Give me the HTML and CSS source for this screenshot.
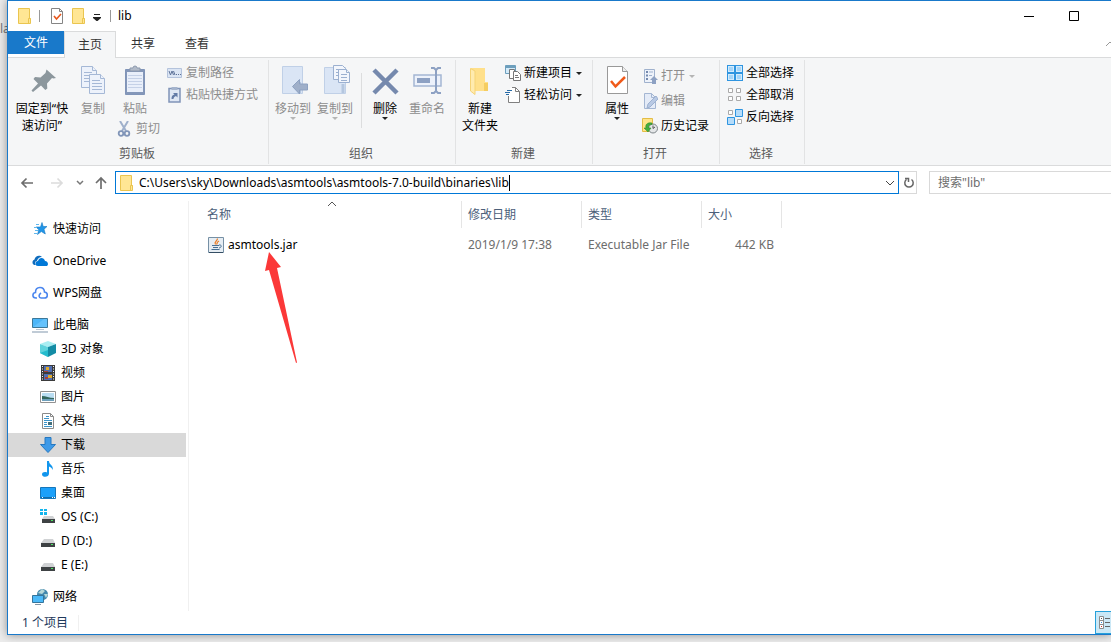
FILE: index.html
```
<!DOCTYPE html>
<html lang="zh-CN">
<head>
    <meta charset="UTF-8">
    <meta name="viewport" content="width=device-width, initial-scale=1.0">
    <title>lib</title>
    <link rel="stylesheet" href="styles.css">
</head>
<body>
    <span class="behind">la</span>
    <div class="window">
        <header class="titlebar">
            <svg class="folder" width="16" height="16" viewBox="0 0 16 16"><path d="M1.500.5h11v10h1v5h-12z" fill="#ffe694" stroke="#eac54f"/><path d="M11.500 15v-4.500h2" fill="none" stroke="#eac54f"/></svg>
            <span class="divider"></span>
            <button class="quick" aria-label="属性"><svg width="16" height="16" viewBox="0 0 16 16"><path d="M2.500.5h8l3 3v12h-11z" fill="#fff" stroke="#858585"/><path d="M10.500.5v3h3" fill="none" stroke="#858585"/><path d="M5 8l2.500 3L12 6" fill="none" stroke="#e8571c" stroke-width="1.600"/></svg></button>
            <button class="quick" aria-label="新建文件夹"><svg width="16" height="16" viewBox="0 0 16 16"><path d="M1.500.5h11v10h1v5h-12z" fill="#ffe694" stroke="#eac54f"/><path d="M11.500 15v-4.500h2" fill="none" stroke="#eac54f"/></svg></button>
            <button class="quick more" aria-label="自定义"><svg width="8" height="8" viewBox="0 0 8 8"><path d="M1 .5h6" stroke="#222"/><path d="M0 3h8v1L4.500 7h-1L0 4z" fill="#222"/></svg></button>
            <span class="divider"></span>
            <span class="title">lib</span>
            <div class="controls">
                <button aria-label="最小化"><svg width="10" height="10" viewBox="0 0 10 10"><path d="M0 5.500h10" stroke="#000"/></svg></button>
                <button aria-label="最大化"><svg width="10" height="10" viewBox="0 0 10 10"><path d="M.5.5h9v9h-9z" fill="none" stroke="#000"/></svg></button>
            </div>
        </header>

        <nav class="tabs">
            <button class="tab file">文件</button>
            <button class="tab active">主页</button>
            <button class="tab">共享</button>
            <button class="tab">查看</button>
            <button class="collapse" aria-label="折叠功能区"><svg width="10" height="6" viewBox="0 0 10 6"><path d="M1 5l4-4 4 4" fill="none" stroke="#999"/></svg></button>
        </nav>

        <div class="ribbon">
            <section class="group clipboard">
                <div class="tools">
                    <button class="big pin">
                        <svg width="32" height="32" viewBox="0 0 32 32"><path d="M20.500 4.500L30 13l-2.500.5-1.500-.5-5 5.500.3 5-2 1.500-4.300-4.500-8 6.500-1.500-1.500L12 18.500 7.500 14l1.500-2 5.500.5 5-4.500z" fill="#8c979d"/></svg>
                        <span>固定到“快速访问”</span>
                    </button>
                    <button class="big copy" disabled>
                        <svg width="32" height="32" viewBox="0 0 32 32"><g fill="#edf2fb" stroke="#a5b8d6"><path d="M4.500 1.500h11l4 4v17h-15z"/><path d="M15.500 1.500v4h4M7 7.500h8M7 10.500h9M7 13.500h9M7 16.500h9"/><path d="M12.500 9.500h11l4 4v15h-15z"/><path d="M23.500 9.500v4h4M15 15.500h8M15 18.500h10M15 21.500h10M15 24.500h10"/></g></svg>
                        <span>复制</span>
                    </button>
                    <div class="stack">
                        <button class="big paste" disabled>
                            <svg width="32" height="32" viewBox="0 0 32 32"><path d="M6.500 4.500h19v25h-19z" fill="#8497b9" stroke="#8094b8"/><path d="M8 7h16v20H8z" fill="#e9effa"/><path d="M11 6V3h3a2 2 0 0 1 4 0h3v3z" fill="#b1bac8" stroke="#8c99ad"/><path d="M9 10.500h14M9 13.500h14M9 16.500h14M9 19.500h14M9 22.500h14" stroke="#c5d1e7"/></svg>
                            <span>粘贴</span>
                        </button>
                        <button class="small cut" disabled>
                            <svg width="16" height="16" viewBox="0 0 16 16"><path d="M3 0l6 10M11 0L5 10" stroke="#9fb0cb" stroke-width="2"/><g fill="none" stroke="#8195b8" stroke-width="1.800"><circle cx="4" cy="12.500" r="2.300"/><circle cx="10" cy="12.500" r="2.300"/></g></svg>
                            剪切
                        </button>
                    </div>
                    <div class="list">
                        <button class="small" disabled>
                            <svg width="16" height="16" viewBox="0 0 16 16"><path d="M.5 3.500h14v9H.5z" fill="#dbe5f4" stroke="#b4c3dc"/><path d="M2 6l1.500 4L5 6l1.500 4M6.500 6L8 10M9 9.500h1M11 9.500h1M13 9.500h1" fill="none" stroke="#5f7399"/></svg>
                            复制路径
                        </button>
                        <button class="small" disabled>
                            <svg width="16" height="16" viewBox="0 0 16 16"><path d="M2 1.500h11v13.500H2z" fill="#dfe7f4" stroke="#8094b8" stroke-width="1.500"/><path d="M4.500 0h6v3h-6z" fill="#a5b4cd"/><path d="M4.500 12c0-3 1-4 3-4.500L6 6h4.500v4.500L9 9c-1.500.5-2.500 1.500-2.500 3z" fill="#637ba6"/></svg>
                            粘贴快捷方式
                        </button>
                    </div>
                </div>
                <h2>剪贴板</h2>
            </section>

            <section class="group organize">
                <div class="tools">
                    <button class="big" disabled>
                        <svg width="32" height="32" viewBox="0 0 32 32"><path d="M5.500 1.500h20v27h-20z" fill="#dae5f5" stroke="#c0d0e7"/><path d="M22.500 17v11" stroke="#b4c6df" stroke-width="3"/><path d="M15.500 21.500l7-7v4.500h8v6h-8v4z" fill="#9fafc9" stroke="#8da1c1"/></svg>
                        <span>移动到</span>
                        <i class="arrow"></i>
                    </button>
                    <button class="big" disabled>
                        <svg width="32" height="32" viewBox="0 0 32 32"><path d="M5.500 2.500h21v26h-21z" fill="#dae5f5" stroke="#c0d0e7"/><path d="M24 19v9" stroke="#b4c6df" stroke-width="3"/><g fill="#f3f6fc" stroke="#9bb0d0"><path d="M14.500.5h9l3 3v11h-12z"/><path d="M17 4.500h3M17 7.500h3M17 10.500h3"/><path d="M19.500 4.500h8l3 3v10h-11z"/><path d="M27.500 4.500v3h3M22 9.500h6M22 12.500h6M22 15.500h6"/></g></svg>
                        <span>复制到</span>
                        <i class="arrow"></i>
                    </button>
                    <span class="rule"></span>
                    <button class="big">
                        <svg width="32" height="32" viewBox="0 0 32 32"><path d="M5 5l23 23M28 5L5 28" stroke="#7589ad" stroke-width="4.500"/></svg>
                        <span>删除</span>
                        <i class="arrow"></i>
                    </button>
                    <button class="big" disabled>
                        <svg width="32" height="32" viewBox="0 0 32 32"><path d="M3 10h27v11H3z" fill="#edf2fb" stroke="#a4b6d4" stroke-width="1.500"/><path d="M6 13h13v5H6z" fill="#8da1c3"/><path d="M20 3h3l2 2 2-2h3M20 28h3l2-2 2 2h3M25 4v23" fill="none" stroke="#8da1c3" stroke-width="2"/></svg>
                        <span>重命名</span>
                    </button>
                </div>
                <h2>组织</h2>
            </section>

            <section class="group create">
                <div class="tools">
                    <button class="big">
                        <svg width="32" height="32" viewBox="0 0 32 32"><path d="M7 3h14v14h3v9H7z" fill="#ffe08b"/><path d="M20 26v-8h4v8z" fill="#f5cd61"/><path d="M6.500 3.500L11 6v23.500L6.500 26z" fill="#ffebaf" stroke="#f5d377"/></svg>
                        <span>新建<br>文件夹</span>
                    </button>
                    <div class="list">
                        <button class="small">
                            <svg width="16" height="16" viewBox="0 0 16 16"><path d="M.5.5h10v8H.5z" fill="#d3ebfa" stroke="#6d9fbd"/><path d="M.5 2h10" stroke="#6d9fbd" stroke-width="2"/><g fill="#fff" stroke="#777"><path d="M4.500 4.500h5v9h-5z"/><path d="M8.500 6.500h4l3 3v6h-7z"/><path d="M10 10.500h3M10 12.500h4"/></g></svg>
                            新建项目
                            <i class="arrow"></i>
                        </button>
                        <button class="small">
                            <svg width="16" height="16" viewBox="0 0 16 16"><path d="M5.500.5h5l4 4v11h-11V9" fill="#fff"/><path d="M7 .5h3.500l4 4v11h-11V9" fill="none" stroke="#808080"/><path d="M10.500.5v4h4" fill="none" stroke="#808080"/><path d="M2 3.500h5M0 5.500h5M1 7.500h3" stroke="#286ba7"/></svg>
                            轻松访问
                            <i class="arrow"></i>
                        </button>
                    </div>
                </div>
                <h2>新建</h2>
            </section>

            <section class="group open">
                <div class="tools">
                    <button class="big">
                        <svg width="32" height="32" viewBox="0 0 32 32"><path d="M6.500 1.500h15l5 5v22h-20z" fill="#fff" stroke="#999"/><path d="M21.500 1.500v5h5" fill="#eee" stroke="#999"/><path d="M10 16l4.500 5.500L24 12" fill="none" stroke="#f05a1a" stroke-width="2.500"/></svg>
                        <span>属性</span>
                        <i class="arrow"></i>
                    </button>
                    <div class="list">
                        <button class="small" disabled>
                            <svg width="16" height="16" viewBox="0 0 16 16"><path d="M2.500 1.500h10v13h-10z" fill="#edf2fa" stroke="#9fb1cd"/><path d="M4 4h2M4 7.500h2M4 11h2" stroke="#7489ae" stroke-width="2"/><path d="M7 4h4M7 7.500h3" stroke="#9fb1cd"/><path d="M12 8l4 4h-2v4h-4v-4H8z" fill="#8da1c3"/></svg>
                            打开
                            <i class="arrow"></i>
                        </button>
                        <button class="small" disabled>
                            <svg width="16" height="16" viewBox="0 0 16 16"><path d="M2.500.5h7l4 4v11h-11z" fill="#e4ebf7" stroke="#a4b6d2"/><path d="M9.500.5v4h4" fill="none" stroke="#a4b6d2"/><path d="M5 15l1-4 8-8 2 3-8 8z" fill="#b8c9e4" stroke="#9db1d0"/></svg>
                            编辑
                        </button>
                        <button class="small">
                            <svg width="16" height="16" viewBox="0 0 16 16"><path d="M.5.500h10v13H.5z" fill="#ffe48a" stroke="#e3bd47"/><circle cx="11" cy="10.500" r="4.500" fill="#e4e6e8" stroke="#7d8589"/><path d="M11 7.500v3l2-1.500" fill="none" stroke="#555"/><path d="M10 5C5 4 3 7 4 10H2l4 4 3-4H7C6 8 7 6.500 10 6.500z" fill="#44ad3f" stroke="#288726" stroke-width=".5"/></svg>
                            历史记录
                        </button>
                    </div>
                </div>
                <h2>打开</h2>
            </section>

            <section class="group select">
                <div class="tools">
                    <div class="list">
                        <button class="small">
                            <svg width="16" height="16" viewBox="0 0 16 16"><path d="M0 0h16v16H0z" fill="#2f95e0"/><path d="M1 1h6v6H1zM9 1h6v6H9zM1 9h6v6H1zM9 9h6v6H9z" fill="#d3ebfc"/><path d="M2 2h4v4H2zM10 2h4v4h-4zM2 10h4v4H2zM10 10h4v4h-4z" fill="#a5d5f8"/></svg>
                            全部选择
                        </button>
                        <button class="small">
                            <svg width="16" height="16" viewBox="0 0 16 16"><path d="M1.500 1.500h4v4h-4zM9.500 1.500h4v4h-4zM1.500 9.500h4v4h-4zM9.500 9.500h4v4h-4z" fill="#fff" stroke="#aaa"/></svg>
                            全部取消
                        </button>
                        <button class="small">
                            <svg width="16" height="16" viewBox="0 0 16 16"><path d="M1.500 1.500h4v4h-4zM10.500 10.500h4v4h-4z" fill="#fff" stroke="#aaa"/><path d="M8.500.500h7v7h-7zM.5 8.500h7v7h-7z" fill="#b5dcfa" stroke="#2f95e0"/></svg>
                            反向选择
                        </button>
                    </div>
                </div>
                <h2>选择</h2>
            </section>
        </div>

        <div class="location">
            <button class="move" aria-label="后退"><svg width="14" height="14" viewBox="0 0 14 14"><path d="M13 7H2M6.500 2.500L2 7l4.500 4.500" fill="none" stroke="#6e6e6e" stroke-width="1.700"/></svg></button>
            <button class="move" aria-label="前进" disabled><svg width="14" height="14" viewBox="0 0 14 14"><path d="M1 7h11M7.500 2.500L12 7l-4.500 4.500" fill="none" stroke="#dcdcdc" stroke-width="1.700"/></svg></button>
            <button class="recent" aria-label="最近浏览的位置"><svg width="8" height="6" viewBox="0 0 8 6"><path d="M1 1l3 3 3-3" fill="none" stroke="#777" stroke-width="1.500"/></svg></button>
            <button class="up" aria-label="上移"><svg width="14" height="14" viewBox="0 0 14 14"><path d="M7 13V2M2 7l5-5 5 5" fill="none" stroke="#6e6e6e" stroke-width="1.700"/></svg></button>
            <div class="address">
                <svg width="16" height="16" viewBox="0 0 16 16"><path d="M1.500.5h11v10h1v5h-12z" fill="#ffe694" stroke="#eac54f"/><path d="M11.500 15v-4.500h2" fill="none" stroke="#eac54f"/></svg>
                <input type="text" aria-label="地址" value="C:\Users\sky\Downloads\asmtools\asmtools-7.0-build\binaries\lib" spellcheck="false">
                <span class="caret"></span>
                <button class="history" aria-label="以前的位置"><svg width="10" height="6" viewBox="0 0 10 6"><path d="M1 1l4 4 4-4" fill="none" stroke="#444"/></svg></button>
            </div>
            <button class="refresh" aria-label="刷新"><svg width="12" height="12" viewBox="0 0 12 12"><path d="M8.500 2.500a4.200 4.200 0 1 1-5 0M2 1.500h3.500V5" fill="none" stroke="#666" stroke-width="1.500"/></svg></button>
            <input class="search" type="text" aria-label="搜索" placeholder="搜索&quot;lib&quot;">
        </div>

        <main class="content">
            <nav class="sidebar">
                <ul>
                    <li><a href="#"><svg width="16" height="16" viewBox="0 0 16 16"><path d="M10 1.500l1.200 4H15l-3 2.700 1.300 4.800-4-2.500L5.500 13.500l1.300-4.800L4 6h4.500z" fill="#2196e8" stroke="#1578c2" stroke-width=".6"/><path d="M4 3.500h3M2 6.500h3M3 9.500h3M2 12.500h3" stroke="#5fb7ee"/></svg>快速访问</a></li>
                </ul>
                <ul>
                    <li><a href="#"><svg width="16" height="16" viewBox="0 0 16 16"><path d="M4 12H2a3 3 0 0 1 .5-5.500C3 3 7.500 1.500 10 4 7 4 5.500 6 5 8c-2 0-2.500 2.500-1 4z" fill="#0f6cbd"/><path d="M6 13a2.500 2.500 0 0 1 0-5c1-4 6-4 7 0 3.500 0 4 5 1 5z" fill="#0078d7"/></svg>OneDrive</a></li>
                </ul>
                <ul>
                    <li><a href="#"><svg width="16" height="16" viewBox="0 0 16 16"><path d="M5 13H4C0 13 0 8 3.500 7.500 3.500 1 12 1 12.500 7 16.500 7.500 16 13 12.500 13H9c-2 0-3-3 0-5" fill="none" stroke="#4b86ee" stroke-width="1.600"/></svg>WPS网盘</a></li>
                </ul>
                <ul>
                    <li><a href="#"><svg width="16" height="16" viewBox="0 0 16 16"><path d="M.5 1.500h15v9H.5z" fill="#4cb6f8" stroke="#3c7899"/><path d="M1 10L12 2h3v8z" fill="#7bcdff" opacity=".5"/><path d="M4 12.500h8" stroke="#b9c6d1"/><path d="M0 15h16" stroke="#8197ad"/></svg>此电脑</a></li>
                    <li class="child"><a href="#"><svg width="16" height="16" viewBox="0 0 16 16"><path d="M0 3l8-3 8 3-8 3z" fill="#a9eef2"/><path d="M0 3l8 3v10l-8-4z" fill="#5ed3dc"/><path d="M16 3L8 6v10l8-4z" fill="#138ca5"/><path d="M0 12l8-3v7z" fill="#25bccd"/></svg>3D 对象</a></li>
                    <li class="child"><a href="#"><svg width="16" height="16" viewBox="0 0 16 16"><path d="M1 0h14v16H1z" fill="#3b3b3b"/><path d="M2.500 1v15M13.500 1v15" stroke="#f5f5f5" stroke-dasharray="1 1.500"/><path d="M4 1h8v6H4zM4 9h8v6H4z" fill="#506fb4"/><path d="M6 2h3v3H6zM8 10h4v3H8z" fill="#dfaa2b"/><path d="M4 6h4v1H4zM5 12h3v2H5z" fill="#a94138"/></svg>视频</a></li>
                    <li class="child"><a href="#"><svg width="16" height="16" viewBox="0 0 16 16"><path d="M.5 2.500h15v11H.5z" fill="#fff" stroke="#929292"/><path d="M2 4h12v8H2z" fill="#b9ddf2"/><path d="M2 7c4 0 7 2 12 2v1H2z" fill="#33675d"/><path d="M2 10h12v2H2z" fill="#6d9fbb"/></svg>图片</a></li>
                    <li class="child"><a href="#"><svg width="16" height="16" viewBox="0 0 16 16"><path d="M2.500.5h8l3 3v12h-11z" fill="#fff" stroke="#8a8a8a"/><path d="M10.500.5v3h3" fill="none" stroke="#8a8a8a"/><path d="M6 3.500h3M4 5.500h5M4 7.500h8M4 9.500h3M4 11.500h3M4 13.500h8" stroke="#3b94ca"/><path d="M8 9h4v3H8z" fill="#436e7b"/></svg>文档</a></li>
                    <li class="child current"><a href="#"><svg width="16" height="16" viewBox="0 0 16 16"><path d="M5 .5h6v7h4.500L8 15.500.5 7.500H5z" fill="#3e9ae8" stroke="#2678c0"/></svg>下载</a></li>
                    <li class="child"><a href="#"><svg width="16" height="16" viewBox="0 0 16 16"><path d="M7 0h2c0 4 5 4 3.500 9C12 6.500 10 6 9 5.500v7C9 17 2 16.500 2 13.500 2 11 5 10.500 7 11.500z" fill="#1296ed"/></svg>音乐</a></li>
                    <li class="child"><a href="#"><svg width="16" height="16" viewBox="0 0 16 16"><path d="M.5 2.500h15v11H.5z" fill="#1ba0fa" stroke="#1576ba"/><path d="M1 12.500h14" stroke="#116ba9"/><path d="M2 12.500h1M12 12.500h1M14 12.500h1" stroke="#fff"/></svg>桌面</a></li>
                    <li class="child"><a href="#"><svg width="16" height="16" viewBox="0 0 16 16"><path d="M0 0h3v2H0zM4 0h3v2H4zM0 3h3v3H0zM4 3h3v3H4z" fill="#13b5ed"/><path d="M4 7h9l2 3H2z" fill="#d0d2d4"/><path d="M2 10h13v4H2z" fill="#3e4244"/><path d="M11 11h2v1h-2z" fill="#4de462"/></svg>OS (C:)</a></li>
                    <li class="child"><a href="#"><svg width="16" height="16" viewBox="0 0 16 16"><path d="M4 6h9l2 4H1z" fill="#d0d2d4"/><path d="M1 10h14v4H1z" fill="#3e4244"/><path d="M11 11h2v1h-2z" fill="#4de462"/></svg>D (D:)</a></li>
                    <li class="child"><a href="#"><svg width="16" height="16" viewBox="0 0 16 16"><path d="M4 6h9l2 4H1z" fill="#d0d2d4"/><path d="M1 10h14v4H1z" fill="#3e4244"/><path d="M11 11h2v1h-2z" fill="#4de462"/></svg>E (E:)</a></li>
                </ul>
                <ul>
                    <li><a href="#"><svg width="16" height="16" viewBox="0 0 16 16"><circle cx="10.500" cy="5.500" r="5.500" fill="#4288ad"/><path d="M6 4l4-4 3 2-3 3zM12 5l4 0-2 4z" fill="#b6d7d8"/><path d="M.5 6.500h11v7H.5z" fill="#4bb9f8" stroke="#34749b"/><path d="M3 15.500h6" stroke="#8195a4"/></svg>网络</a></li>
                </ul>
            </nav>

            <div class="files">
                <table>
                    <thead>
                        <tr>
                            <th class="name">名称<svg class="sort" width="10" height="6" viewBox="0 0 10 6"><path d="M1 5l4-4 4 4" fill="none" stroke="#555"/></svg></th>
                            <th class="date">修改日期</th>
                            <th class="type">类型</th>
                            <th class="size">大小</th>
                        </tr>
                    </thead>
                    <tbody>
                        <tr>
                            <td class="name"><a href="#"><svg width="16" height="16" viewBox="0 0 16 16"><path d="M.5.5h15v15H.5z" fill="#e6edf3" stroke="#7690a5"/><path d="M1 15.500h14" stroke="#344e64"/><path d="M9.500 1.500c0 3-4 3-2 6M11 4c-3 1.500-1 2-2.500 3.500" fill="none" stroke="#ea7c24" stroke-width="1.200"/><path d="M4 8.500h7M5 10.500h5M3.500 12.500h8M11 8c3-.5 3 2.500 0 3" fill="none" stroke="#477095"/></svg>asmtools.jar</a></td>
                            <td>2019/1/9 17:38</td>
                            <td>Executable Jar File</td>
                            <td class="amount">442 KB</td>
                        </tr>
                    </tbody>
                </table>
                <svg class="pointer" width="36" height="112" viewBox="0 0 36 112"><path d="M5 0l12 15-4 1 20 94.500-1 .5L5 18l-4 1z" fill="#fb3838"/></svg>
            </div>
        </main>

        <footer class="status">
            <span class="count">1 个项目</span>
            <button class="details" aria-label="详细信息"><svg width="14" height="14" viewBox="0 0 14 14"><path d="M.5.500h4v12h-4zM0 4.500h5M0 8.500h5" fill="#fff" stroke="#8c8c8c"/><path d="M2 2.500h1" stroke="#555"/><path d="M2 6.500h1" stroke="#2c8ce0"/><path d="M2 10.500h1" stroke="#c33"/><path d="M6 2.500h5M6 6.500h5M6 10.500h5" stroke="#666"/></svg></button>
        </footer>
    </div>
</body>
</html>
```
FILE: styles.css
```
* {
    box-sizing: border-box;
}
body {
    margin: 0;
    min-height: 100vh;
    padding: 0 0 7px 7px;
    display: flex;
    background-color: #ececec;
    color: #000;
    font: 12px/16px "Noto Sans", "Noto Sans CJK SC", sans-serif;
    overflow: hidden;
}
button, input {
    font: inherit;
    color: inherit;
    background: none;
    border: 0;
    padding: 0;
    margin: 0;
}
button {
    white-space: nowrap;
}
svg {
    display: block;
    flex: none;
}
a {
    color: inherit;
    text-decoration: none;
}
.behind {
    position: absolute;
    left: 0;
    top: 21px;
    color: #777;
}
.window {
    position: relative;
    flex: 1;
    min-width: 0;
    display: flex;
    flex-direction: column;
    background-color: #fff;
    border: 1px solid #1979ca;
    border-right: 0;
    box-shadow: 0 0 9px rgba(0, 0, 0, 0.4);
}

/* title bar */
.titlebar {
    height: 30px;
    display: flex;
    align-items: center;
    padding-left: 9px;
}
.divider {
    width: 1px;
    height: 12px;
    margin: 0 9px 0 6px;
    background-color: #999;
}
.quick {
    margin-right: 6px;
}
.quick.more {
    margin: 3px 3px 0 0;
}
.title {
    margin-left: -2px;
}
.controls {
    margin-left: auto;
    display: flex;
}
.controls button {
    width: 45px;
    display: flex;
    justify-content: center;
}
.controls button:last-child {
    margin-right: 15px;
}

/* tabs */
.tabs {
    display: flex;
    height: 27px;
    border-bottom: 1px solid #dadbdc;
}
.tab {
    width: 54px;
    color: #333;
}
.tab.file {
    width: 56px;
    height: 23px;
    background-color: #1979ca;
    color: #fff;
}
.tab.active {
    width: 52px;
    height: 27px;
    background-color: #f5f6f7;
    border: 1px solid #dadbdc;
    border-bottom: 0;
}
.collapse {
    margin: 0 -4px 0 auto;
}

/* ribbon */
.ribbon {
    display: flex;
    height: 108px;
    padding: 2px 0 1px;
    background-color: #f5f6f7;
    border-bottom: 1px solid #dadbdc;
}
.group {
    display: flex;
    flex-direction: column;
    border-right: 1px solid #e2e3e4;
}
.group h2 {
    margin: auto 0 0;
    padding-right: 2px;
    font-size: 12px;
    font-weight: normal;
    line-height: 20px;
    text-align: center;
    color: #5a5a5a;
}
.clipboard {
    width: 261px;
}
.organize {
    width: 187px;
}
.create {
    width: 137px;
}
.open {
    width: 127px;
}
.select {
    width: 85px;
}
.tools {
    display: flex;
    padding: 5px 3px 0;
}
.clipboard .tools {
    padding-left: 4px;
}
.big {
    width: 42px;
    display: flex;
    flex-direction: column;
    align-items: center;
    line-height: 17px;
}
.big span {
    margin-top: 3px;
}
.pin {
    width: 60px;
    padding: 0 2px;
    white-space: normal;
}
.stack .cut {
    margin: 4px 0 0 3px;
}
.list {
    display: flex;
    flex-direction: column;
    gap: 6px;
    padding-left: 4px;
}
.clipboard .list {
    padding-left: 7px;
}
.small {
    display: flex;
    align-items: center;
    gap: 3px;
}
.open .list {
    gap: 9px;
    padding: 3px 0 0 4px;
}
button:disabled {
    color: #8d8d8d;
}
.arrow {
    border: 3px solid transparent;
    border-top-color: #222;
    border-bottom: 0;
}
.small .arrow {
    margin-left: 1px;
}
button:disabled .arrow {
    border-top-color: #b5b5b5;
}
.rule {
    width: 1px;
    height: 55px;
    margin: 8px 2px 0 5px;
    background-color: #dcddde;
}

/* address row */
.location {
    display: flex;
    height: 33px;
    padding: 5px 0;
    align-items: center;
}
.move {
    width: 30px;
    padding-left: 12px;
}
.recent {
    margin-left: 8px;
}
.up {
    margin: 0 7px 0 10px;
}
.address {
    flex: 1;
    display: flex;
    align-items: center;
    height: 23px;
    padding: 0 3px 0 3px;
    border: 1px solid #0078d7;
}
.address input {
    field-sizing: content;
    margin-left: 4px;
}
.caret {
    width: 1px;
    height: 16px;
    background-color: #000;
}
.history {
    margin-left: auto;
}
.refresh {
    width: 18px;
    height: 23px;
    padding-left: 4px;
    border: 1px solid #d9d9d9;
    border-left: 0;
}
.search {
    width: 182px;
    height: 23px;
    margin-left: 12px;
    padding-left: 8px;
    border: 1px solid #d9d9d9;
    border-right: 0;
}
.search::placeholder {
    color: #6d6d6d;
}

/* sidebar and file list */
.content {
    flex: 1;
    display: flex;
    padding-top: 2px;
}
.sidebar {
    width: 181px;
    padding: 16px 2px 2px 0;
    display: flex;
    flex-direction: column;
    gap: 8px;
    border-right: 1px solid #f0f0f0;
}
.sidebar ul {
    margin: 0;
    padding: 0;
    list-style: none;
}
.sidebar a {
    display: flex;
    align-items: center;
    gap: 5px;
    height: 24px;
    padding-left: 24px;
}
.sidebar .child a {
    padding-left: 32px;
}
.current {
    background-color: #d9d9d9;
}
.files {
    position: relative;
    flex: 1;
}
table {
    border-collapse: separate;
    border-spacing: 0;
    table-layout: fixed;
    width: 593px;
}
th {
    height: 27px;
    padding: 0 0 0 6px;
    border-right: 1px solid #e5e5e5;
    color: #4c607a;
    font-weight: normal;
    text-align: left;
}
th.name {
    position: relative;
    width: 273px;
    padding-left: 18px;
}
.sort {
    position: absolute;
    left: 138px;
    top: 0;
}
.date, .type {
    width: 120px;
}
.size {
    width: 80px;
}
td {
    height: 34px;
    padding: 0 0 0 6px;
    color: #6d6d6d;
}
td.name {
    padding-left: 19px;
    color: #000;
}
td a {
    display: flex;
    align-items: center;
    gap: 4px;
}
td.amount {
    padding-right: 8px;
    text-align: right;
}
.pointer {
    position: absolute;
    left: 75px;
    top: 51px;
}

/* status bar */
.status {
    display: flex;
    align-items: center;
    justify-content: space-between;
    height: 23px;
    padding-left: 14px;
    color: #1e395b;
}
.count {
    padding-right: 10px;
    border-right: 1px solid #f0f0f0;
}
.details {
    width: 16px;
    height: 23px;
    padding-left: 3px;
    border: 1px solid #26a0da;
    border-right: 0;
    background-color: #cbe8f6;
    overflow: hidden;
}
```
